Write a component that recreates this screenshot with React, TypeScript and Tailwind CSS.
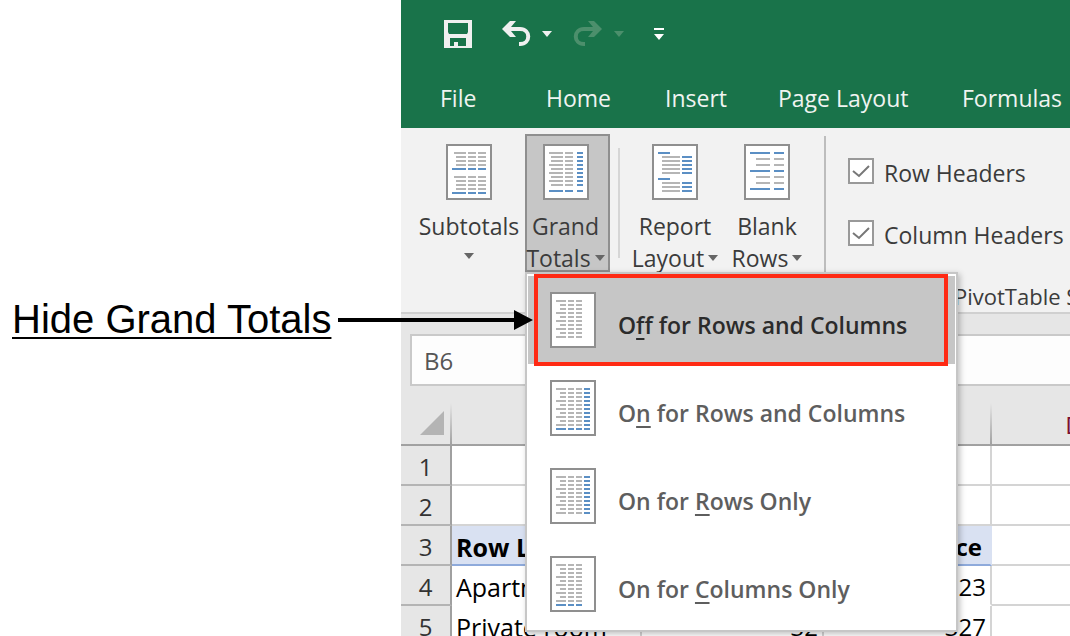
import type { ReactNode } from 'react'

const GREY = '#b5b5b5'
const BLUE = '#5b8fc4'

// one bar is [x, y, width, blue?] on a 23 x 28 grid
type Bar = [number, number, number, boolean?]

function SheetIcon({ bars }: { bars: Bar[] }) {
  return (
    <svg viewBox="0 0 23 28" className="h-14 w-[46px] shrink-0" shapeRendering="crispEdges" aria-hidden="true">
      <rect width="23" height="28" fill="#8f8f8f" />
      <rect x="1" y="1" width="21" height="26" fill="#fff" />
      {bars.map(([x, y, w, blue], i) => (
        <rect key={i} x={x} y={y} width={w} height="1" fill={blue ? BLUE : GREY} />
      ))}
    </svg>
  )
}

const subtotalBars: Bar[] = [4, 16].flatMap((top): Bar[] => [
  ...[0, 2, 4, 6].flatMap((dy): Bar[] => [
    [dy === 0 ? 4 : 5, top + dy, dy === 0 ? 6 : 5],
    [11, top + dy, 4],
    [16, top + dy, 4],
  ]),
  [3, top + 8, 7, true],
  [11, top + 8, 4, true],
  [16, top + 8, 4, true],
])

const grandBars: Bar[] = [
  ...[3, 4, 4, 3, 4, 3, 4, 3, 4].flatMap((x, i): Bar[] => [
    [x, 4 + i * 2, 10 - x],
    [11, 4 + i * 2, 4],
    [17, 4 + i * 2, 3, true],
  ]),
  [3, 23, 7, true],
  [11, 23, 4, true],
  [17, 23, 3, true],
]

const reportBars: Bar[] = [
  [3, 4, 6, true],
  ...[6, 8, 10, 12, 14, 19, 21, 23].flatMap((y): Bar[] => [
    [5, y, 9],
    [15, y, 5, true],
  ]),
  [3, 17, 6, true],
]

const blankBars: Bar[] = [4, 7, 10, 13, 16, 19, 22].flatMap((y, i): Bar[] =>
  i % 3 === 0
    ? [[3, y, 10, true], [15, y, 5, true]]
    : [[6, y, 7], [15, y, 5]],
)

function totalsBars(rows: boolean, columns: boolean): Bar[] {
  const starts = [3, 5, 5, 3, 5, 3, 5, 3, 5, 3]
  const bars = starts.flatMap((x, i): Bar[] => {
    const y = 4 + i * 2
    const line: Bar[] = [[x, y, 8 - x], [9, y, 3], [13, y, 3]]
    return rows ? [...line, [17, y, 3, true]] : line
  })
  if (columns) {
    bars.push([3, 24, 5, true], [9, 24, 3, true], [13, 24, 3, true])
    if (rows) bars.push([17, 24, 3, true])
  }
  return bars
}

function Caret({ className = 'text-[#666]' }: { className?: string }) {
  return (
    <svg viewBox="0 0 10 6" className={`h-1.5 w-2.5 shrink-0 ${className}`} aria-hidden="true">
      <path d="M0 0h10L5 6z" fill="currentColor" />
    </svg>
  )
}

function CurvedArrow({ flip }: { flip?: boolean }) {
  return (
    <svg viewBox="0 0 30 28" className={`h-7 w-[30px] ${flip ? '-scale-x-100 text-[#4c8f6c]' : 'text-[#f0f0f0]'}`} aria-hidden="true">
      <path d="M0 9L8 1h6L9 7v4l5 6H8z" fill="currentColor" />
      <path d="M6 9h12c11 0 11 15 0 15h-1" fill="none" stroke="currentColor" strokeWidth="4" />
    </svg>
  )
}

function TitleBar() {
  return (
    <div className="flex h-[68px] items-center pl-[43px]">
      <button aria-label="Save">
        <svg viewBox="0 0 28 28" className="size-7" aria-hidden="true">
          <path fill="#f0f0f0" fillRule="evenodd" d="M0 0h28v28H0zM4 3v9l1 2h18l1-2V3zM6 18v8h4v-4h4v4h8v-8z" />
        </svg>
      </button>
      <button aria-label="Undo" className="ml-[30px]">
        <CurvedArrow />
      </button>
      <button aria-label="Undo history" className="ml-2.5">
        <Caret className="text-[#f0f0f0]" />
      </button>
      <button aria-label="Redo" className="ml-5" disabled>
        <CurvedArrow flip />
      </button>
      <button aria-label="Redo history" className="ml-3" disabled>
        <Caret className="text-[#4c8f6c]" />
      </button>
      <button aria-label="Customize toolbar" className="ml-[30px]">
        <svg viewBox="0 0 10 12" className="h-3 w-2.5" fill="#fff" aria-hidden="true">
          <path d="M0 0h10v2H0zM0 6h10L5 12z" />
        </svg>
      </button>
    </div>
  )
}

function Tabs() {
  return (
    <nav className="flex h-[60px] items-center whitespace-nowrap pl-[39px] text-[23px] font-medium text-[#f0f4f1]">
      <button className="w-[106px] shrink-0 text-left">File</button>
      <button className="w-[119px] shrink-0 text-left">Home</button>
      <button className="w-[113px] shrink-0 text-left">Insert</button>
      <button className="w-[184px] shrink-0 text-left">Page Layout</button>
      <button className="shrink-0 text-left">Formulas</button>
    </nav>
  )
}

type RibbonButtonProps = { bars: Bar[]; top: string; bottom?: string; className: string }

function RibbonButton({ bars, top, bottom, className }: RibbonButtonProps) {
  return (
    <button className={`flex h-[138px] shrink-0 flex-col items-center whitespace-nowrap border-2 pt-2 ${className}`}>
      <SheetIcon bars={bars} />
      <span className="mt-2.5 leading-8">{top}</span>
      <span className="flex h-8 items-center gap-1 leading-8">
        {bottom}
        <Caret />
      </span>
    </button>
  )
}

type MenuItemProps = { bars: Bar[]; active?: boolean; children: ReactNode }

function MenuItem({ bars, active, children }: MenuItemProps) {
  return (
    <button
      role="menuitem"
      className={`flex h-[88px] w-full items-center whitespace-nowrap pl-[22px] font-semibold [font-variant-ligatures:none] ${active ? 'bg-[#c6c6c6] text-[#2b2b2b]' : 'text-[#5e5e5e]'}`}
    >
      <SheetIcon bars={bars} />
      <span className="ml-[22px] pt-2.5">{children}</span>
    </button>
  )
}

function Key({ children }: { children: ReactNode }) {
  return <span className="underline decoration-2 underline-offset-4">{children}</span>
}

function TotalsMenu() {
  return (
    <div role="menu" className="absolute left-0 top-full z-10 w-[433px] border-2 border-[#c6c6c6] bg-white px-px py-0.5 text-[23px] shadow-[2px_2px_6px_rgba(0,0,0,0.25)]">
      <MenuItem bars={totalsBars(false, false)} active>O<Key>f</Key>f for Rows and Columns</MenuItem>
      <MenuItem bars={totalsBars(true, true)}>O<Key>n</Key> for Rows and Columns</MenuItem>
      <MenuItem bars={totalsBars(true, false)}>On for <Key>R</Key>ows Only</MenuItem>
      <MenuItem bars={totalsBars(false, true)}>On for <Key>C</Key>olumns Only</MenuItem>
      {/* highlight drawn round the first entry */}
      <div className="pointer-events-none absolute left-[7px] top-0 h-[92px] w-[414px] border-4 border-[#ff2a14]" />
    </div>
  )
}

function CheckOption({ label }: { label: string }) {
  return (
    <label className="flex h-[62px] items-center gap-2.5 whitespace-nowrap">
      <span className="grid size-[26px] shrink-0 place-items-center">
        <input type="checkbox" defaultChecked className="col-start-1 row-start-1 size-[26px] appearance-none border-2 border-[#999] bg-white" />
        <svg viewBox="0 0 18 13" className="pointer-events-none z-0 col-start-1 row-start-1 h-[13px] w-[18px]" fill="none" stroke="#777" strokeWidth="2" aria-hidden="true">
          <path d="M1 6l6 5L17 1" />
        </svg>
      </span>
      <span className="pt-1">{label}</span>
    </label>
  )
}

function Ribbon() {
  return (
    <div className="flex h-[186px] items-start border-b-2 border-[#d0d0d0] bg-[#f2f2f2] pt-1.5 text-[23px] font-medium text-[#3b3b3b]">
      <RibbonButton bars={subtotalBars} top="Subtotals" className="ml-4 w-[104px] border-transparent" />
      <div className="relative ml-1 shrink-0">
        <RibbonButton bars={grandBars} top="Grand" bottom="Totals" className="w-[85px] border-[#8f8f8f] bg-[#c6c6c6] pr-1" />
        <TotalsMenu />
      </div>
      <div className="ml-2 mt-3.5 h-[110px] w-0.5 shrink-0 bg-[#d6d6d6]" />
      <RibbonButton bars={reportBars} top="Report" bottom="Layout" className="ml-2 w-[94px] border-transparent" />
      <RibbonButton bars={blankBars} top="Blank" bottom="Rows" className="w-[90px] border-transparent" />
      <div className="ml-3 mt-0.5 h-[160px] w-0.5 shrink-0 bg-[#bdbdbd]" />
      <div className="ml-[22px] shrink-0">
        <div className="pt-1.5">
          <CheckOption label="Row Headers" />
          <CheckOption label="Column Headers" />
        </div>
        <div className="ml-[106px] mt-4 whitespace-nowrap text-[22px] leading-8">PivotTable Style Options</div>
      </div>
    </div>
  )
}

const rows = [
  ['', '', ''],
  ['', '', ''],
  ['Row Labels', 'Count', 'Price'],
  ['Apartment', '41', '123'],
  ['Private room', '32', '327'],
]

function Sheet() {
  return (
    <table className="w-[757px] table-fixed border-separate border-spacing-0 text-2xl leading-[38px] text-black">
      <colgroup>
        <col className="w-[51px]" />
        <col className="w-[190px]" />
        <col className="w-[182px]" />
        <col className="w-[168px]" />
        <col className="w-[166px]" />
      </colgroup>
      <thead>
        <tr className="h-[60px] bg-[#e6e6e6] font-normal text-[#444]">
          <th className="border-b-2 border-r-2 border-[#a0a0a0] p-0 [border-image:linear-gradient(#e6e6e6_30%,#a0a0a0)_1]">
            <svg viewBox="0 0 24 24" className="ml-auto mr-1.5 mt-4 size-6" aria-label="Select all">
              <path d="M24 0v24H0z" fill="#b4b4b4" />
            </svg>
          </th>
          {['A', 'B', 'C', 'D'].map((name) => (
            <th key={name} className={`border-b-2 border-r-2 border-[#a0a0a0] p-0 pt-5 font-normal [border-image:linear-gradient(#e6e6e6_30%,#a0a0a0)_1] ${name === 'D' ? 'text-[#7a1033]' : ''}`}>
              {name}
            </th>
          ))}
        </tr>
      </thead>
      <tbody>
        {rows.map((row, i) => (
          <tr key={i} className="h-10">
            <th className="border-b-2 border-r-2 border-b-[#b4b4b4] border-r-[#a0a0a0] bg-[#e6e6e6] p-0 pt-1 font-normal leading-[34px] text-[#333]">{i + 1}</th>
            {row.map((cell, j) => (
              <td
                key={j}
                className={`whitespace-nowrap border-b-2 border-r-2 border-r-[#d4d4d4] pb-0 pl-1 pt-1 leading-[34px] ${j > 0 ? 'text-right' : 'text-[25px]'} ${i === 2 ? 'border-b-[#8eaadb] border-r-[#d9e1f2] bg-[#d9e1f2] pr-2 font-bold' : i > 2 ? 'border-b-white pr-1' : 'border-b-[#d4d4d4] pr-1'}`}
              >
                {cell}
              </td>
            ))}
            <td className="border-b-2 border-r-2 border-[#d4d4d4] p-0" />
          </tr>
        ))}
      </tbody>
    </table>
  )
}

function Callout() {
  return (
    <aside className="relative z-20 w-[401px] shrink-0 pl-3 pt-[296px] font-['Liberation_Sans',Arial,sans-serif] text-[40px] leading-[46px] text-black">
      <span className="whitespace-nowrap underline decoration-2 underline-offset-4">Hide Grand Totals</span>
      <svg viewBox="0 0 196 20" className="absolute left-[338px] top-[310px] h-5 w-[196px]" aria-hidden="true">
        <path d="M0 8h176V0l19 10-19 10v-8H0z" />
      </svg>
    </aside>
  )
}

export default function App() {
  return (
    <div className="flex h-screen overflow-hidden bg-white font-['Open_Sans','Noto_Sans',sans-serif]">
      <Callout />
      <main className="min-w-0 flex-1 overflow-hidden">
        <header className="bg-[#19734a]">
          <TitleBar />
          <Tabs />
        </header>
        <Ribbon />
        <div className="bg-[#e6e6e6] pl-[9px] pt-5">
          <input aria-label="Name box" defaultValue="B6" className="block h-[52px] w-full border-2 border-r-0 border-[#c9c9c9] bg-[#fdfdfd] pl-3 text-2xl text-[#555]" />
        </div>
        <Sheet />
      </main>
    </div>
  )
}
